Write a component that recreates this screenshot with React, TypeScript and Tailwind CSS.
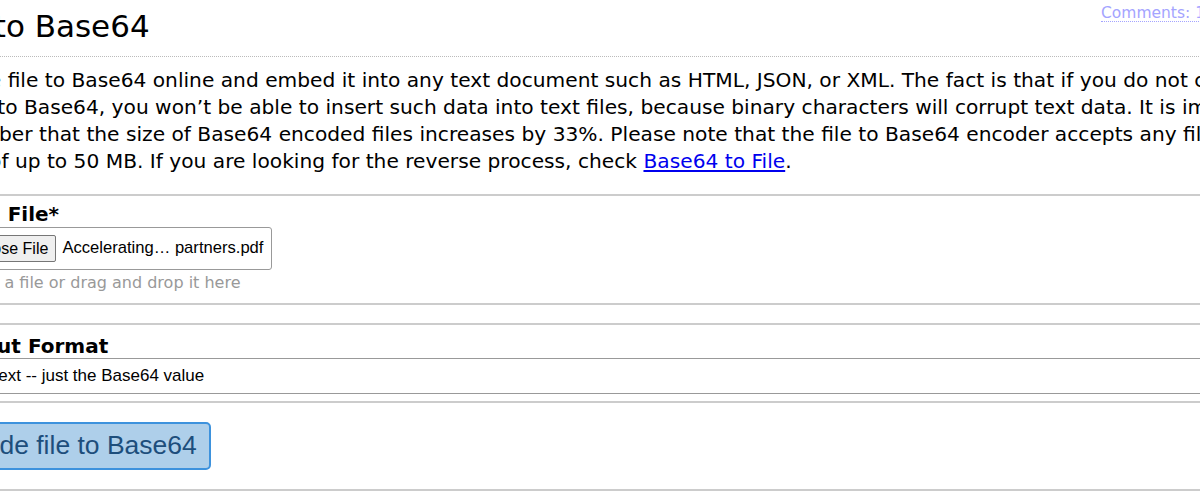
export default function App() {
  return (
    <div className="relative w-[1200px] h-[493px] overflow-hidden bg-white text-black font-['DejaVu_Sans',Verdana,sans-serif]">
      <div className="relative ml-[-61px] w-[1400px]">
        {/* comments counter, floats at the top right */}
        <a
          href="#comments"
          className="absolute left-[1162px] top-[-1px] inline-block text-[15.5px] leading-[16px] text-[#a4a4ff] border-b border-dotted border-[#a4a4ff]"
        >
          Comments: 14
        </a>

        <h1 className="mt-[6px] pb-[10px] border-b border-dotted border-[#bbb] text-[31px] leading-[40px] font-normal">
          <span className="ml-[-7px]">File to Base64</span>
        </h1>

        <p className="mt-[10px] mb-[19px] ml-[-12px] text-[20.2px] leading-[27px] whitespace-nowrap">
          Encode file to Base64 online and embed it into any text document such as HTML, JSON, or XML. The fact is that if you do not convert
          <br />
          binary to Base64, you won’t be able to insert such data into text files, because binary characters will corrupt text data. It is important to
          <br />
          remember that the size of Base64 encoded files increases by 33%. Please note that the file to Base64 encoder accepts any file
          <br />
          types of up to 50 MB. If you are looking for the reverse process, check{' '}
          <a href="#" className="text-[#0000ee] underline">
            Base64 to File
          </a>
          .
        </p>

        <form>
          {/* file field */}
          <div className="border-y-2 border-[#ccc] pl-[3px] pt-[6px] pb-[10px]">
            <label className="block text-[20px] leading-[24px] font-bold">Local File*</label>
            <div className="mt-[1px] ml-[4px] flex h-[43px] w-[326px] items-center rounded-[3px] border border-[#999] pl-[8px] font-['Liberation_Sans',Arial,sans-serif] text-[16px]">
              <span className="flex h-[27px] items-center rounded-[2px] border border-[#767676] bg-[#efefef] px-[7px]">
                Choose File
              </span>
              <span className="ml-[6px] whitespace-nowrap text-[16.6px]">Accelerating… partners.pdf</span>
            </div>
            <div className="mt-[3px] ml-[8px] text-[16px] leading-[20px] text-[#999]">
              Select a file or drag and drop it here
            </div>
          </div>

          {/* output format */}
          <div className="mt-[18px] border-t-2 border-[#ccc] pl-[3px] pt-[9px] pb-[7px]">
            <label className="block text-[20px] leading-[24px] font-bold">Output Format</label>
            <select
              defaultValue="text"
              className="ml-[4px] block h-[36px] w-[1380px] appearance-none border border-[#999] bg-white pl-[4px] font-['Liberation_Sans',Arial,sans-serif] text-[17px] text-black"
            >
              <option value="text">Plain text -- just the Base64 value</option>
              <option value="datauri">Data URI -- data:content/type;base64</option>
            </select>
          </div>

          {/* submit */}
          <div className="border-y-2 border-[#ccc] pl-[3px] pt-[19px] pb-[19px]">
            <button
              type="button"
              className="ml-[-17px] h-[48px] rounded-[5px] border-2 border-[#3d92dd] bg-[#aecfea] px-[12px] font-['Liberation_Sans',Arial,sans-serif] text-[26.5px] text-[#1d4e7c]"
            >
              Encode file to Base64
            </button>
          </div>
        </form>
      </div>
    </div>
  )
}
